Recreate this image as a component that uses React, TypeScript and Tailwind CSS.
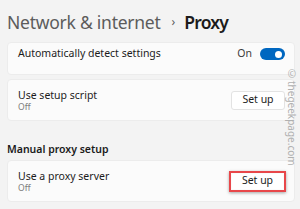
import React from "react";

const font = { fontFamily: '"Noto Sans", "Open Sans", sans-serif' };

function Button({ outlined }: { outlined?: boolean }) {
  const btn = (
    <div className="w-[54px] h-[19px] rounded-[3px] bg-white border border-[#e3e3e3] flex items-center justify-center text-[10.5px] text-[#1b1b1b]">
      Set up
    </div>
  );
  if (!outlined) return btn;
  return (
    <div className="p-[1px] border-2 border-[#e8474a] shadow-[0_1px_3px_rgba(0,0,0,0.35)]">
      <div className="w-[51px] h-[15px] bg-white flex items-center justify-center text-[10.5px] text-[#1b1b1b]">
        Set up
      </div>
    </div>
  );
}

export default function App() {
  return (
    <div
      className="relative w-[300px] h-[209px] bg-[#f3f3f3] overflow-hidden pl-[7px] pr-[5px]"
      style={font}
    >
      <div className="h-[42px] pt-[10px] flex items-start whitespace-nowrap">
        <span className="text-[17.5px] leading-[24px] text-[#5c5c5c] tracking-[-0.25px]">Network &amp; internet</span>
        <span className="text-[12px] leading-[24px] text-[#5c5c5c] ml-[11px] mr-[9px]">›</span>
        <span className="text-[17.5px] leading-[24px] font-semibold text-[#1b1b1b] tracking-[-0.8px]">Proxy</span>
      </div>

      <div className="flex flex-col gap-[4px]">
        <div className="h-[33px] rounded-[4px] bg-[#fbfbfb] border border-[#ececec] pl-[10px] pr-[9px] pb-[9px] flex items-center">
          <span className="text-[10.5px] text-[#1b1b1b] flex-1">Automatically detect settings</span>
          <span className="text-[10.5px] text-[#3b3b3b] mr-[8px]">On</span>
          <div className="w-[25px] h-[12px] rounded-full bg-[#0067c0] flex items-center justify-end pr-[3px]">
            <div className="w-[7px] h-[7px] rounded-full bg-white" />
          </div>
        </div>

        <div className="h-[42px] rounded-[4px] bg-[#fbfbfb] border border-[#ececec] pl-[10px] pr-[9px] flex items-center">
          <div className="flex-1 flex flex-col">
            <span className="text-[10.5px] leading-[13px] text-[#1b1b1b]">Use setup script</span>
            <span className="text-[8.5px] leading-[10px] text-[#7a7a7a]">Off</span>
          </div>
          <Button />
        </div>
      </div>

      <div className="h-[39px] pt-[21px] text-[10.5px] leading-[14px] font-semibold text-[#1b1b1b]">
        Manual proxy setup
      </div>

      <div className="h-[42px] rounded-[4px] bg-[#fbfbfb] border border-[#ececec] pl-[10px] pr-[8px] flex items-center">
        <div className="flex-1 flex flex-col">
          <span className="text-[10.5px] leading-[13px] text-[#1b1b1b]">Use a proxy server</span>
          <span className="text-[8.5px] leading-[10px] text-[#7a7a7a]">Off</span>
        </div>
        <Button outlined />
      </div>

      <div className="absolute left-[287px] top-[67px] w-[10px] h-[92px] flex items-start justify-center">
        <span className="[writing-mode:vertical-rl] text-[10px] leading-[10px] text-[#b0b0b0] whitespace-nowrap">
          ©thegeekpage.com
        </span>
      </div>
    </div>
  );
}
